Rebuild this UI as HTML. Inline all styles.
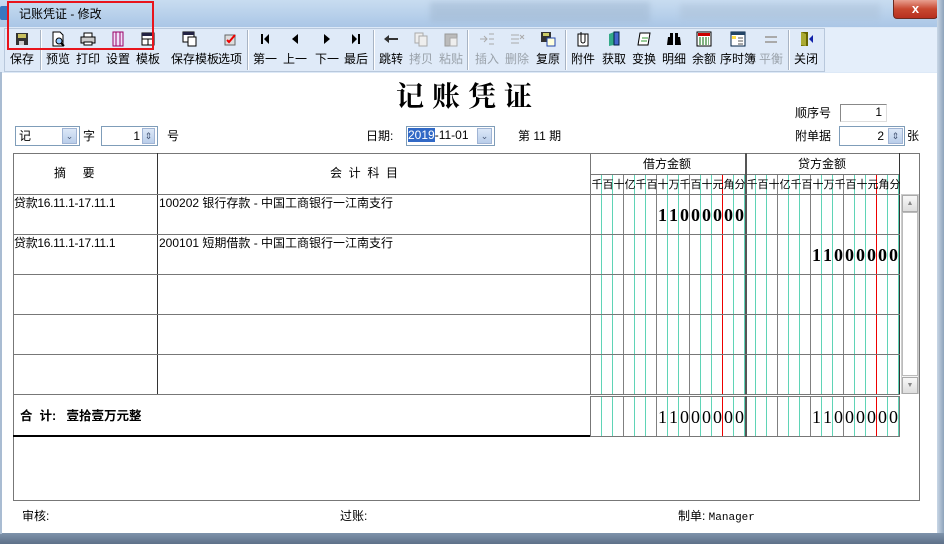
<!DOCTYPE html>
<html><head><meta charset="utf-8"><style>
*{margin:0;padding:0;box-sizing:border-box}
body{width:944px;height:544px;overflow:hidden;background:#fff;font-family:"Liberation Sans","Noto Sans CJK SC",sans-serif;font-size:12px;color:#000;position:relative}
.a{position:absolute}
.t{position:absolute;white-space:nowrap;line-height:14px}
.tb{position:absolute;top:31px;width:30px;text-align:center}
.tb svg{display:block;margin:0 auto;width:16px;height:16px}
.tb span{display:block;margin-top:5px;font-size:12px;line-height:14px;white-space:nowrap}
.dis span{color:#9aa2aa}
.sep{position:absolute;top:30px;width:2px;height:40px;border-left:1px solid #a8b4c4;border-right:1px solid #fff}
.money{position:absolute;width:154px;background:linear-gradient(#e00,#e00) 131px 0/1px 100% no-repeat,repeating-linear-gradient(90deg,transparent 0 32px,#808080 32px 33px),repeating-linear-gradient(90deg,transparent 0 10px,#5fd4b6 10px 11px)}
.hl{position:absolute;height:1px;background:#777}
.vl{position:absolute;width:1px;background:#777}
.dg{position:absolute;width:11px;text-align:center;font-size:11px;line-height:19px;top:176px;letter-spacing:-1px}
.num{position:absolute;font-family:"Liberation Serif",serif;font-weight:bold;font-size:18px;line-height:20px;white-space:nowrap}
.num b{display:inline-block;width:11px;text-align:center}
.num.n b{font-weight:normal}
.box{position:absolute;border:1px solid #7f9db9;background:#fff}
.btnd{position:absolute;width:15px;background:linear-gradient(#dce8f8,#b9cdea);border:1px solid #a0b4d4;color:#4a5a78;font-size:9px;text-align:center}
</style></head><body>
<div class="a" style="left:0;top:0;width:944px;height:27px;background:linear-gradient(#c8dcf0,#b6cfea 60%,#aac6e6)"></div>
<div class="a" style="left:430px;top:2px;width:220px;height:20px;background:#9fb6cf;opacity:.5;filter:blur(3px)"></div>
<div class="a" style="left:680px;top:4px;width:200px;height:16px;background:#a9bdd3;opacity:.4;filter:blur(3px)"></div>
<div class="a" style="left:0;top:6px;width:9px;height:14px;background:#3a78c0;border-radius:2px"></div>
<div class="t" style="left:19px;top:7px;font-size:12px">记账凭证 - 修改</div>
<div class="a" style="left:893px;top:0;width:45px;height:19px;background:linear-gradient(#e8a090,#c84830 50%,#b83020);border:1px solid #6b2a20;border-top:none;border-radius:0 0 4px 4px;color:#fff;text-align:center;font-weight:bold;font-size:13px;line-height:18px">x</div>
<div class="a" style="left:0;top:27px;width:944px;height:46px;background:#dde9f7"></div>
<div class="a" style="left:4px;top:28px;width:821px;height:44px;background:#dfeaf8;border:1px solid #b8c8dc"></div>
<div class="a" style="left:825px;top:28px;width:112px;height:44px;background:#e4eefa"></div>
<div class="a" style="left:937px;top:0;width:7px;height:544px;background:linear-gradient(90deg,#c9d7e6,#8ea3bb)"></div>

<div class="tb" style="left:7px"><svg viewBox="0 0 16 16"><rect x="2" y="2" width="12" height="12" fill="#333"/><rect x="4" y="3" width="8" height="4" fill="#c8c060"/><rect x="5" y="10" width="5" height="4" fill="#ccc"/></svg><span>保存</span></div>
<div class="sep" style="left:40px"></div>
<div class="tb" style="left:43px"><svg viewBox="0 0 16 16"><path d="M3 1h7l3 3v11H3z" fill="#fff" stroke="#000"/><circle cx="9" cy="10" r="3" fill="#9cf" stroke="#000"/><path d="M11 12l3 3" stroke="#000" stroke-width="2"/></svg><span>预览</span></div>
<div class="tb" style="left:73px"><svg viewBox="0 0 16 16"><path d="M4 2h8v4H4z" fill="#fff" stroke="#000"/><rect x="1" y="6" width="14" height="6" fill="#ccc" stroke="#000"/><rect x="4" y="11" width="8" height="3" fill="#fff" stroke="#000"/></svg><span>打印</span></div>
<div class="tb" style="left:103px"><svg viewBox="0 0 16 16"><rect x="3" y="1" width="10" height="14" fill="#f0e0f8" stroke="#906"/><path d="M6 1v14M10 1v14" stroke="#906"/></svg><span>设置</span></div>
<div class="tb" style="left:133px"><svg viewBox="0 0 16 16"><rect x="2" y="2" width="12" height="12" fill="#fff" stroke="#000"/><rect x="2" y="2" width="12" height="3" fill="#224"/><path d="M2 8h12M8 8v6" stroke="#000"/></svg><span>模板</span></div>
<div class="tb" style="left:171px;width:38px"><svg viewBox="0 0 16 16"><rect x="1" y="1" width="11" height="10" fill="#fff" stroke="#000"/><rect x="1" y="1" width="11" height="3" fill="#224"/><rect x="6" y="6" width="8" height="9" fill="#fff" stroke="#000"/></svg><span>保存模板</span></div>
<div class="tb" style="left:215px"><svg viewBox="0 0 16 16"><rect x="3" y="4" width="10" height="10" fill="#ddd" stroke="#666"/><path d="M5 9l2 2 6-7" stroke="#e00" stroke-width="2" fill="none"/></svg><span>选项</span></div>
<div class="sep" style="left:247px"></div>
<div class="tb" style="left:250px"><svg viewBox="0 0 16 16"><path d="M4 3h2v10H4zM12 3v10L7 8z" fill="#000"/></svg><span>第一</span></div>
<div class="tb" style="left:280px"><svg viewBox="0 0 16 16"><path d="M11 3v10L5 8z" fill="#000"/></svg><span>上一</span></div>
<div class="tb" style="left:312px"><svg viewBox="0 0 16 16"><path d="M5 3v10l6-5z" fill="#000"/></svg><span>下一</span></div>
<div class="tb" style="left:341px"><svg viewBox="0 0 16 16"><path d="M4 3v10l5-5zM10 3h2v10h-2z" fill="#000"/></svg><span>最后</span></div>
<div class="sep" style="left:373px"></div>
<div class="tb" style="left:376px"><svg viewBox="0 0 16 16"><path d="M1 8l5-4v3h9v2H6v3z" fill="#333"/></svg><span>跳转</span></div>
<div class="tb dis" style="left:406px"><svg viewBox="0 0 16 16"><rect x="2" y="2" width="8" height="10" fill="#eee" stroke="#aaa"/><rect x="6" y="5" width="8" height="10" fill="#eee" stroke="#aaa"/></svg><span>拷贝</span></div>
<div class="tb dis" style="left:436px"><svg viewBox="0 0 16 16"><rect x="2" y="3" width="12" height="12" fill="#bbb" stroke="#999"/><rect x="7" y="7" width="7" height="8" fill="#eee" stroke="#aaa"/></svg><span>粘贴</span></div>
<div class="sep" style="left:467px"></div>
<div class="tb dis" style="left:472px"><svg viewBox="0 0 16 16"><path d="M1 8h7M5 5l3 3-3 3M10 3h5M10 8h5M10 13h5" stroke="#aaa" fill="none"/></svg><span>插入</span></div>
<div class="tb dis" style="left:502px"><svg viewBox="0 0 16 16"><path d="M2 4h8M2 8h8M2 12h8M11 4l4 4M15 4l-4 4" stroke="#aaa" fill="none"/></svg><span>删除</span></div>
<div class="tb" style="left:533px"><svg viewBox="0 0 16 16"><rect x="1" y="1" width="10" height="10" fill="#333"/><rect x="3" y="2" width="6" height="3" fill="#cc6"/><rect x="7" y="7" width="8" height="8" fill="#ffd" stroke="#24a"/></svg><span>复原</span></div>
<div class="sep" style="left:565px"></div>
<div class="tb" style="left:568px"><svg viewBox="0 0 16 16"><rect x="3" y="3" width="10" height="12" fill="#fff" stroke="#000"/><path d="M6 1v9a2 2 0 0 0 4 0V3" stroke="#000" fill="none"/></svg><span>附件</span></div>
<div class="tb" style="left:599px"><svg viewBox="0 0 16 16"><path d="M3 3l5-2v13l-5 1z" fill="#3a8"/><path d="M8 1h5v13H8z" fill="#46c" stroke="#024"/></svg><span>获取</span></div>
<div class="tb" style="left:629px"><svg viewBox="0 0 16 16"><path d="M4 2h10l-2 12H2z" fill="#fff" stroke="#000"/><path d="M6 7h6M5 10h6" stroke="#393"/></svg><span>变换</span></div>
<div class="tb" style="left:659px"><svg viewBox="0 0 16 16"><path d="M2 6h5v8H1zM9 6h5l1 8H9z" fill="#000"/><rect x="4" y="2" width="3" height="5" fill="#000"/><rect x="9" y="2" width="3" height="5" fill="#000"/></svg><span>明细</span></div>
<div class="tb" style="left:689px"><svg viewBox="0 0 16 16"><rect x="1" y="1" width="14" height="14" fill="#fff" stroke="#000"/><rect x="2" y="2" width="12" height="3" fill="#c00"/><path d="M3 7h10M3 9h10M3 11h10M3 13h10" stroke="#060" stroke-dasharray="2 1"/></svg><span>余额</span></div>
<div class="tb" style="left:719px;width:38px"><svg viewBox="0 0 16 16"><rect x="1" y="1" width="14" height="14" fill="#fff" stroke="#024"/><rect x="1" y="1" width="14" height="3" fill="#246"/><rect x="2" y="5" width="4" height="3" fill="#fd4"/><path d="M8 7h5M8 10h5M8 13h5" stroke="#555"/></svg><span>序时簿</span></div>
<div class="tb dis" style="left:756px"><svg viewBox="0 0 16 16"><rect x="2" y="5" width="12" height="2" fill="#aaa"/><rect x="2" y="10" width="12" height="2" fill="#aaa"/></svg><span>平衡</span></div>
<div class="sep" style="left:788px"></div>
<div class="tb" style="left:791px"><svg viewBox="0 0 16 16"><path d="M3 1h7v14H3z" fill="#660"/><path d="M3 1l5 2v12l-5-1z" fill="#aa3"/><path d="M11 8l4-4v8z" fill="#12a"/></svg><span>关闭</span></div>
<div class="a" style="left:7px;top:1px;width:147px;height:49px;border:2px solid #e8141c"></div>

<div class="t" style="left:396px;top:80px;font-size:28px;line-height:30px;font-weight:bold;letter-spacing:8px;font-family:'Noto Serif CJK SC','Liberation Serif',serif">记账凭证</div>
<div class="t" style="left:795px;top:106px">顺序号</div>
<div class="a" style="left:840px;top:104px;width:47px;height:18px;border:1px solid #888;border-right-color:#ddd;border-bottom-color:#ddd;text-align:right;padding-right:4px;line-height:15px">1</div>
<div class="t" style="left:795px;top:129px">附单据</div>
<div class="box" style="left:839px;top:126px;width:66px;height:20px;text-align:right;padding-right:20px;line-height:18px">2</div>
<div class="btnd" style="left:888px;top:128px;height:16px;line-height:14px">⇕</div>
<div class="t" style="left:907px;top:129px">张</div>

<div class="box" style="left:15px;top:126px;width:65px;height:20px;padding-left:3px;line-height:18px">记</div>
<div class="btnd" style="left:62px;top:128px;height:16px;line-height:14px">⌄</div>
<div class="t" style="left:83px;top:129px">字</div>
<div class="box" style="left:101px;top:126px;width:57px;height:20px;text-align:right;padding-right:17px;line-height:18px">1</div>
<div class="btnd" style="left:142px;top:128px;width:13px;height:16px;line-height:14px">⇕</div>
<div class="t" style="left:167px;top:129px">号</div>
<div class="t" style="left:366px;top:129px">日期:</div>
<div class="box" style="left:406px;top:126px;width:89px;height:20px;line-height:16px;padding-left:1px"><span style="background:#3169c6;color:#fff">2019</span>-11-01</div>
<div class="btnd" style="left:477px;top:128px;height:16px;line-height:14px">⌄</div>
<div class="t" style="left:518px;top:129px">第 11 期</div>

<div class="money" style="left:591px;top:175px;height:220px"></div>
<div class="money" style="left:745px;top:175px;height:220px"></div>
<div class="money" style="left:591px;top:396px;height:40px"></div>
<div class="money" style="left:745px;top:396px;height:40px"></div>
<div class="vl" style="left:13px;top:153px;height:348px"></div>
<div class="vl" style="left:919px;top:153px;height:348px"></div>
<div class="hl" style="left:13px;top:500px;width:907px"></div>
<div class="hl" style="left:13px;top:153px;width:907px"></div>
<div class="hl" style="left:591px;top:174px;width:308px"></div>
<div class="vl" style="left:157px;top:153px;height:242px;background:#333"></div>
<div class="vl" style="left:590px;top:153px;height:242px"></div>
<div class="vl" style="left:745px;top:153px;height:242px;width:2px;background:#555"></div>
<div class="vl" style="left:899px;top:153px;height:242px;background:#333"></div>
<div class="hl" style="left:13px;top:194px;width:887px"></div>
<div class="hl" style="left:13px;top:234px;width:887px"></div>
<div class="hl" style="left:13px;top:274px;width:887px"></div>
<div class="hl" style="left:13px;top:314px;width:887px"></div>
<div class="hl" style="left:13px;top:354px;width:887px"></div>
<div class="hl" style="left:13px;top:394px;width:887px"></div>
<div class="hl" style="left:590px;top:396px;width:310px"></div>
<div class="hl" style="left:590px;top:436px;width:310px"></div>
<div class="hl" style="left:13px;top:435px;width:577px;height:2px;background:#000"></div>
<div class="vl" style="left:590px;top:396px;height:41px"></div>
<div class="vl" style="left:745px;top:396px;height:41px;width:2px;background:#555"></div>
<div class="vl" style="left:899px;top:396px;height:41px"></div>

<div class="t" style="left:54px;top:166px">摘&nbsp;&nbsp;&nbsp;&nbsp;&nbsp;要</div>
<div class="t" style="left:330px;top:166px">会&nbsp;&nbsp;计&nbsp;&nbsp;科&nbsp;&nbsp;目</div>
<div class="t" style="left:643px;top:157px">借方金额</div>
<div class="t" style="left:798px;top:157px">贷方金额</div>
<div class="t" style="left:14px;top:196px;letter-spacing:-0.3px">贷款16.11.1-17.11.1</div>
<div class="t" style="left:159px;top:196px">100202 银行存款 - 中国工商银行一江南支行</div>
<div class="t" style="left:14px;top:236px;letter-spacing:-0.3px">贷款16.11.1-17.11.1</div>
<div class="t" style="left:159px;top:236px">200101 短期借款 - 中国工商银行一江南支行</div>
<div class="t" style="left:20px;top:409px;font-weight:bold;font-size:12.5px">合&nbsp;&nbsp;计:&nbsp;&nbsp;&nbsp;壹拾壹万元整</div>

<div class="dg" style="left:591px">千</div><div class="dg" style="left:602px">百</div><div class="dg" style="left:613px">十</div><div class="dg" style="left:624px">亿</div><div class="dg" style="left:635px">千</div><div class="dg" style="left:646px">百</div><div class="dg" style="left:657px">十</div><div class="dg" style="left:668px">万</div><div class="dg" style="left:679px">千</div><div class="dg" style="left:690px">百</div><div class="dg" style="left:701px">十</div><div class="dg" style="left:712px">元</div><div class="dg" style="left:723px">角</div><div class="dg" style="left:734px">分</div>
<div class="dg" style="left:746px">千</div><div class="dg" style="left:757px">百</div><div class="dg" style="left:768px">十</div><div class="dg" style="left:779px">亿</div><div class="dg" style="left:790px">千</div><div class="dg" style="left:801px">百</div><div class="dg" style="left:812px">十</div><div class="dg" style="left:823px">万</div><div class="dg" style="left:834px">千</div><div class="dg" style="left:845px">百</div><div class="dg" style="left:856px">十</div><div class="dg" style="left:867px">元</div><div class="dg" style="left:878px">角</div><div class="dg" style="left:889px">分</div>

<div class="num" style="left:657px;top:205px"><b>1</b><b>1</b><b>0</b><b>0</b><b>0</b><b>0</b><b>0</b><b>0</b></div>
<div class="num" style="left:811px;top:245px"><b>1</b><b>1</b><b>0</b><b>0</b><b>0</b><b>0</b><b>0</b><b>0</b></div>
<div class="num n" style="left:657px;top:407px"><b>1</b><b>1</b><b>0</b><b>0</b><b>0</b><b>0</b><b>0</b><b>0</b></div>
<div class="num n" style="left:811px;top:407px"><b>1</b><b>1</b><b>0</b><b>0</b><b>0</b><b>0</b><b>0</b><b>0</b></div>

<div class="a" style="left:901px;top:194px;width:18px;height:200px;background:#f4f4f4;border:1px solid #ccc"></div>
<div class="a" style="left:902px;top:195px;width:16px;height:17px;background:linear-gradient(#f8f8f8,#ddd);border:1px solid #aaa;font-size:7px;color:#888;text-align:center;line-height:15px">▲</div>
<div class="a" style="left:902px;top:212px;width:16px;height:164px;background:#fff;border:1px solid #bbb"></div>
<div class="a" style="left:902px;top:377px;width:16px;height:17px;background:linear-gradient(#f8f8f8,#ddd);border:1px solid #aaa;font-size:7px;color:#888;text-align:center;line-height:15px">▼</div>

<div class="t" style="left:22px;top:509px">审核:</div>
<div class="t" style="left:340px;top:509px">过账:</div>
<div class="t" style="left:678px;top:509px">制单: <span style="font-family:'Liberation Mono',monospace;font-size:11px">Manager</span></div>
<div class="a" style="left:0;top:533px;width:944px;height:11px;background:linear-gradient(#7e93ab,#5d7088)"></div>
<div class="a" style="left:0;top:72px;width:2px;height:462px;background:#a9bcd2"></div>
</body></html>
